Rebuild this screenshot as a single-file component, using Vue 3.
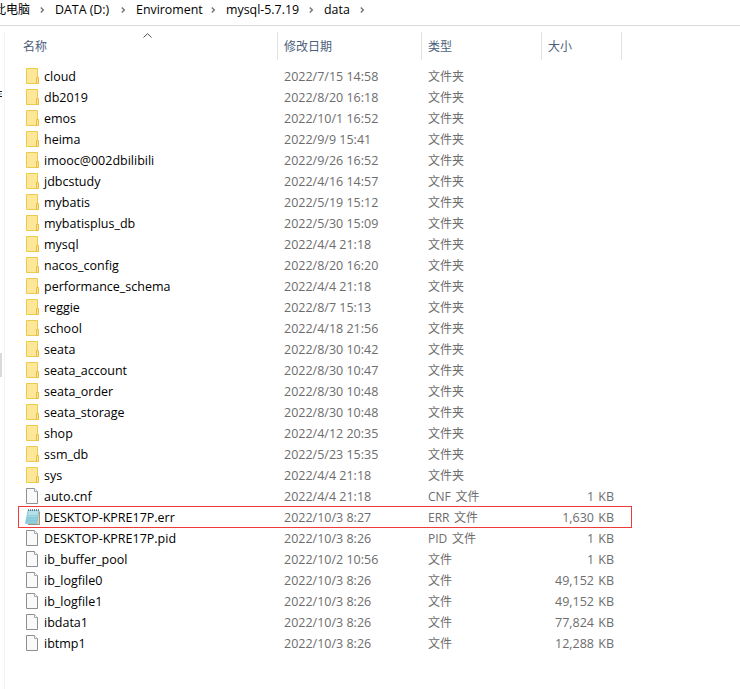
<script setup>
const crumbs = [
  { text: '此电脑', width: 36 },
  { text: 'DATA (D:)', width: 56 },
  { text: 'Enviroment', width: 65 },
  { text: 'mysql-5.7.19', width: 73 },
  { text: 'data', width: 26 },
]

const folders = [
  ['cloud', '2022/7/15 14:58'],
  ['db2019', '2022/8/20 16:18'],
  ['emos', '2022/10/1 16:52'],
  ['heima', '2022/9/9 15:41'],
  ['imooc@002dbilibili', '2022/9/26 16:52'],
  ['jdbcstudy', '2022/4/16 14:57'],
  ['mybatis', '2022/5/19 15:12'],
  ['mybatisplus_db', '2022/5/30 15:09'],
  ['mysql', '2022/4/4 21:18'],
  ['nacos_config', '2022/8/20 16:20'],
  ['performance_schema', '2022/4/4 21:18'],
  ['reggie', '2022/8/7 15:13'],
  ['school', '2022/4/18 21:56'],
  ['seata', '2022/8/30 10:42'],
  ['seata_account', '2022/8/30 10:47'],
  ['seata_order', '2022/8/30 10:48'],
  ['seata_storage', '2022/8/30 10:48'],
  ['shop', '2022/4/12 20:35'],
  ['ssm_db', '2022/5/23 15:35'],
  ['sys', '2022/4/4 21:18'],
].map(([name, date]) => ({ icon: 'folder', name, date, type: '文件夹', size: '' }))

const files = [
  ['file', 'auto.cnf', '2022/4/4 21:18', 'CNF 文件', '1 KB'],
  ['note', 'DESKTOP-KPRE17P.err', '2022/10/3 8:27', 'ERR 文件', '1,630 KB'],
  ['file', 'DESKTOP-KPRE17P.pid', '2022/10/3 8:26', 'PID 文件', '1 KB'],
  ['file', 'ib_buffer_pool', '2022/10/2 10:56', '文件', '1 KB'],
  ['file', 'ib_logfile0', '2022/10/3 8:26', '文件', '49,152 KB'],
  ['file', 'ib_logfile1', '2022/10/3 8:26', '文件', '49,152 KB'],
  ['file', 'ibdata1', '2022/10/3 8:26', '文件', '77,824 KB'],
  ['file', 'ibtmp1', '2022/10/3 8:26', '文件', '12,288 KB'],
].map(([icon, name, date, type, size]) => ({ icon, name, date, type, size }))

const rows = [...folders, ...files]
</script>

<template>
  <div class="explorer">
    <nav class="path">
      <template v-for="c in crumbs" :key="c.text">
        <span class="crumb" :style="{ width: c.width + 'px' }">{{ c.text }}</span>
        <svg class="chevron" width="25" height="10" viewBox="0 0 25 10">
          <path d="M10.8 2.5 L13.3 5 L10.8 7.5" fill="none" stroke="#777" stroke-width="1.5" />
        </svg>
      </template>
    </nav>
    <div class="body">
      <aside class="side">
        <svg class="clip" width="2" height="8" viewBox="0 0 2 8">
          <path d="M0 1.5H2M0 6.5H2" stroke="#222" />
          <path d="M0 4H1.5" stroke="#4a91c5" />
        </svg>
        <div class="thumb"></div>
      </aside>
      <main class="list">
        <header class="head">
          <div class="th th-name">
            名称
            <svg class="sort" width="9" height="5" viewBox="0 0 9 5">
              <path d="M0.5 4.5 L4.5 0.7 L8.5 4.5" fill="none" stroke="#555" />
            </svg>
          </div>
          <div class="th th-date">修改日期</div>
          <div class="th th-type">类型</div>
          <div class="th th-size">大小</div>
        </header>
        <div v-for="r in rows" :key="r.name" class="row" :class="{ marked: r.icon === 'note' }">
          <svg class="icon" width="17" height="21" viewBox="0 0 17 21">
            <template v-if="r.icon === 'folder'">
              <path d="M2.5 2.5H13.5V17.5H2.5Z" fill="#ffe79a" stroke="#ecc94f" />
              <path d="M12.5 11.5H14.5V17.5H12.5Z" fill="#ffe596" stroke="#e8bd3e" />
            </template>
            <template v-else-if="r.icon === 'file'">
              <path d="M2.5 2.5H10.5L13.5 5.5V17.5H2.5Z" fill="#f9f9f9" stroke="#8c8f91" />
              <path d="M10.5 2.5V5.5H13.5" fill="#fff" stroke="#a5a7a8" />
            </template>
            <template v-else>
              <path d="M5 4H15.5V18H4Z" fill="#d8d2bd" />
              <path d="M15.5 4.5V17.5H4" fill="none" stroke="#8b8673" stroke-width=".8" />
              <path d="M4 3H14.8L12.8 16.5H1.3Z" fill="#8fcfe0" />
              <path d="M3.9 4H14.6L13.7 9.5H3Z" fill="#b5e0ea" />
              <path d="M3.3 8.5H13.8M2.8 11H13.4M2.4 13.5H13" stroke="#7cc0d2" stroke-width=".5" />
              <path d="M4 3.5L1.4 16.5H12.8L14.8 3.5" fill="none" stroke="#77b3c5" stroke-width=".5" />
              <path d="M4.5 2V4M6.5 2V4M8.5 2V4M10.5 2V4M12.5 2V4M14.5 2V4" stroke="#53666d" stroke-width=".8" />
            </template>
          </svg>
          <span class="name">{{ r.name }}</span>
          <span class="date">{{ r.date }}</span>
          <span class="type">{{ r.type }}</span>
          <span class="size">{{ r.size }}</span>
        </div>
      </main>
    </div>
  </div>
</template>

<style>
body {
  background: #fff;
}
</style>

<style scoped>
.explorer {
  width: 740px;
  height: 689px;
  overflow: hidden;
  background: #fff;
  font-family: "Open Sans", "Noto Sans CJK SC", sans-serif;
  font-size: 12.5px;
  color: #000;
  display: flex;
  flex-direction: column;
}
.path {
  flex: none;
  box-sizing: border-box;
  border-bottom: 1px solid #d9d9d9;
  height: 26px;
  padding-bottom: 6px;
  display: flex;
  align-items: center;
}
.crumb {
  flex: none;
  white-space: nowrap;
  line-height: 19px;
  font-size: 12.4px;
}
.crumb:first-child {
  margin-left: -6px;
  font-size: 12px;
}
.chevron {
  flex: none;
}
.body {
  flex: 1;
  display: flex;
}
.side {
  width: 4px;
  flex: none;
  border-right: 1px solid #f3f3f3;
  margin-top: 6px;
  padding-top: 58px;
}
.clip {
  display: block;
}
.thumb {
  width: 2px;
  height: 24px;
  margin-top: 255px;
  background: #d9d9d9;
}
.list {
  padding-top: 6px;
  width: 627px;
}
.head {
  display: flex;
  height: 28px;
  margin-bottom: 6px;
}
.th {
  box-sizing: border-box;
  border-right: 1px solid #e2e2e2;
  padding-left: 6px;
  line-height: 30px;
  font-size: 12px;
  color: #4c607a;
}
.th-name {
  position: relative;
  width: 273px;
  padding-left: 18px;
}
.th-date {
  width: 144px;
}
.th-type {
  width: 120px;
}
.th-size {
  width: 80px;
}
.sort {
  position: absolute;
  left: 138px;
  top: 1px;
}
.row {
  box-sizing: border-box;
  position: relative;
  display: flex;
  height: 21px;
  line-height: 21px;
  margin-left: 13px;
  padding-left: 6px;
  white-space: pre;
  color: #6d6d6d;
}
.marked::after {
  content: "";
  position: absolute;
  left: 0;
  top: -1px;
  width: 612px;
  height: 20px;
  border: 1px solid #ee3a3a;
}
.icon {
  flex: none;
  width: 17px;
}
.name {
  width: 243px;
  padding-left: 3px;
  box-sizing: border-box;
  color: #000;
}
.date {
  width: 144px;
}
.type {
  width: 106px;
  font-size: 12px;
  word-spacing: 1.5px;
}
.size {
  width: 80px;
  text-align: right;
  word-spacing: 1px;
}
</style>
